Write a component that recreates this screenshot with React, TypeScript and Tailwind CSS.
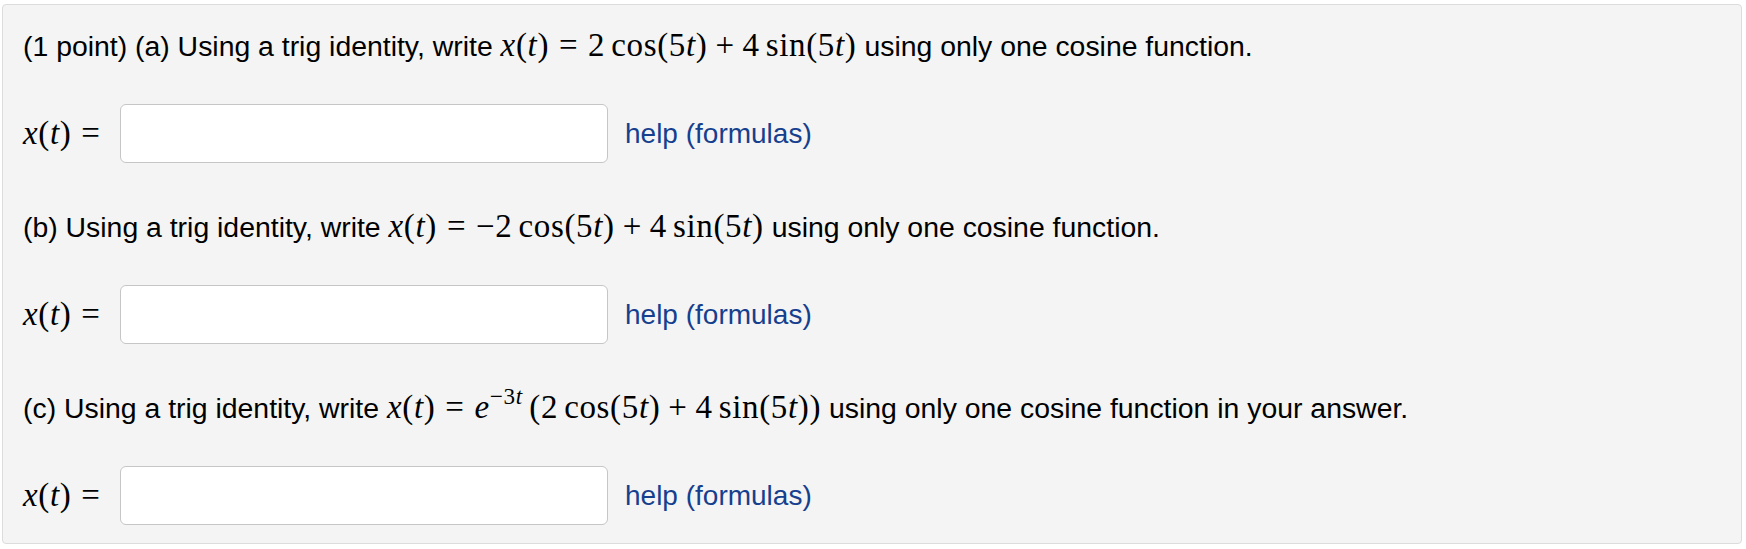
import React from "react";

const I = ({ children }: { children: React.ReactNode }) => <span className="italic">{children}</span>;
const Rel = ({ children }: { children: React.ReactNode }) => <span className="mx-[0.3em]">{children}</span>;
const Bin = ({ children }: { children: React.ReactNode }) => <span className="mx-[0.24em]">{children}</span>;
const Fn = ({ children }: { children: React.ReactNode }) => <span className="ml-[0.18em]">{children}</span>;

function M({ children }: { children: React.ReactNode }) {
  return (
    <span className="font-['Liberation_Serif','Times_New_Roman',serif] text-[33px] tracking-[0.02em] text-black">
      {children}
    </span>
  );
}

function Xt() {
  return (
    <>
      <I>x</I>(<I>t</I>)
    </>
  );
}

function AnswerRow() {
  return (
    <div className="mt-[39px] flex h-[59px] items-center">
      <div className="w-[100px] pl-[3px]">
        <M>
          <Xt />
          <Rel>=</Rel>
        </M>
      </div>
      <input
        type="text"
        className="h-[59px] w-[488px] rounded-[6px] border border-[#c6c6c6] bg-white outline-none"
      />
      <a href="#" className="ml-[17px] text-[28px] text-[#163f8e]">
        help (formulas)
      </a>
    </div>
  );
}

function Prompt({ children }: { children: React.ReactNode }) {
  return <div className="h-[40px] whitespace-nowrap pl-[3px] leading-[40px]">{children}</div>;
}

export default function App() {
  return (
    <div className="bg-white pt-[4px] pl-[2px]">
      <div className="h-[540px] w-[1740px] rounded-[4px] border border-[#dcdcdc] bg-[#f4f4f4] pt-[20px] pl-[17px] font-['Liberation_Sans',Arial,sans-serif] text-[28.4px] text-black">
        <Prompt>
          (1 point) (a) Using a trig identity, write{" "}
          <M>
            <Xt />
            <Rel>=</Rel>2<Fn>cos</Fn>(5<I>t</I>)<Bin>+</Bin>4<Fn>sin</Fn>(5<I>t</I>)
          </M>{" "}
          using only one cosine function.
        </Prompt>
        <AnswerRow />

        <div className="mt-[43px]">
          <Prompt>
            (b) Using a trig identity, write{" "}
            <M>
              <Xt />
              <Rel>=</Rel>−2<Fn>cos</Fn>(5<I>t</I>)<Bin>+</Bin>4<Fn>sin</Fn>(5<I>t</I>)
            </M>{" "}
            using only one cosine function.
          </Prompt>
          <AnswerRow />
        </div>

        <div className="mt-[43px]">
          <Prompt>
            (c) Using a trig identity, write{" "}
            <M>
              <Xt />
              <Rel>=</Rel>
              <I>e</I>
              <sup className="relative top-[-0.6em] align-baseline text-[0.7em]">
                −3<I>t</I>
              </sup>
              <span className="ml-[0.2em]">(</span>2<Fn>cos</Fn>(5<I>t</I>)<Bin>+</Bin>4<Fn>sin</Fn>(5<I>t</I>))
            </M>{" "}
            using only one cosine function in your answer.
          </Prompt>
          <AnswerRow />
        </div>
      </div>
    </div>
  );
}
